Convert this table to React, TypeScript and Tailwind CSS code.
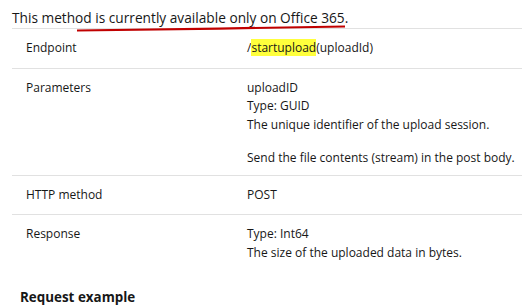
import React from "react";

const rows: { label: string; value: React.ReactNode; pb: string }[] = [
  {
    label: "Endpoint",
    pb: "pb-[10px]",
    value: (
      <p>
        /<span className="bg-[#ffff3c]">startupload</span>(uploadId)
      </p>
    ),
  },
  {
    label: "Parameters",
    pb: "pb-[7px]",
    value: (
      <>
        <p>uploadID</p>
        <p>Type: GUID</p>
        <p>The unique identifier of the upload session.</p>
        <p className="mt-[15px]">Send the file contents (stream) in the post body.</p>
      </>
    ),
  },
  { label: "HTTP method", pb: "pb-[10px]", value: <p>POST</p> },
  {
    label: "Response",
    pb: "pb-[10px]",
    value: (
      <>
        <p>Type: Int64</p>
        <p>The size of the uploaded data in bytes.</p>
      </>
    ),
  },
];

export default function App() {
  return (
    <div
      className="w-[522px] h-[307px] overflow-hidden bg-white text-[#171717]"
      style={{ fontFamily: '"Open Sans", "Noto Sans", sans-serif' }}
    >
      <div className="relative pl-[12px] pt-[8px]">
        <p className="text-[13.7px] leading-[20px]">
          This method is currently available only on Office 365.
        </p>
        <svg
          className="absolute left-0 top-0 pointer-events-none"
          width="522"
          height="40"
        >
          <path
            d="M77 30.5 C 160 29.5, 260 28, 345 26.5"
            stroke="#c00000"
            strokeWidth="2.2"
            fill="none"
            strokeLinecap="butt"
          />
        </svg>
      </div>
      <div className="ml-[12px] border-t border-[#e1e1e1]">
        {rows.map((r, i) => (
          <div
            key={r.label}
            className={`flex text-[12px] leading-[18.5px] ${i < rows.length - 1 ? "border-b border-[#e1e1e1]" : ""}`}
          >
            <div className={`w-[221px] shrink-0 pl-[14px] pt-[10px] ${r.pb}`}>{r.label}</div>
            <div className={`flex-1 pl-[14px] pt-[10px] ${r.pb}`}>{r.value}</div>
          </div>
        ))}
      </div>
      <p className="pl-[20px] mt-[16px] text-[13.4px] font-bold leading-[18px]">Request example</p>
    </div>
  );
}
